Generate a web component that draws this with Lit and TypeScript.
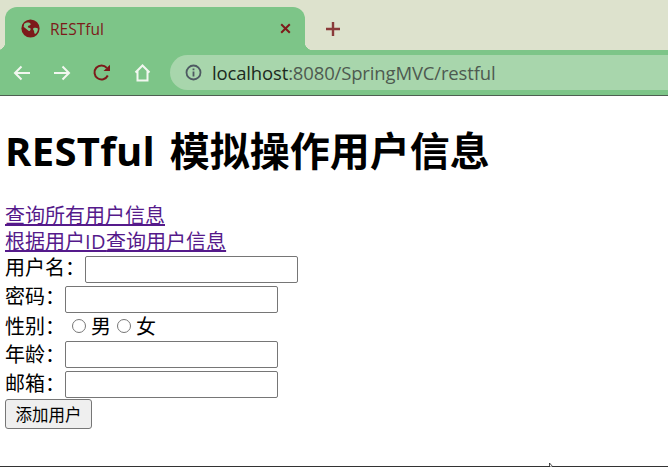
import { LitElement, html, css } from "lit";
import { customElement } from "lit/decorators.js";

@customElement("app-root")
export class AppRoot extends LitElement {
  static styles = css`
    :host { display: block; width: 668px; height: 467px; overflow: hidden; background: #fff; color: #000;
      font-family: "Open Sans", "Noto Sans CJK SC", sans-serif; }
    * { box-sizing: border-box; }
    svg { display: block; flex: none; }
    .strip { height: 50px; background: #dde2cd; display: flex; align-items: flex-end; padding-left: 5px; }
    .tab { position: relative; width: 300px; height: 43px; background: #7dc588; border-radius: 12px 12px 0 0; display: flex; align-items: center; padding: 0 14px 0 16px; color: #7d1a1a; }
    .tab::before, .tab::after { content: ""; position: absolute; bottom: 0; width: 8px; height: 8px; }
    .tab::before { left: -8px; background: radial-gradient(circle at 0 0, transparent 8px, #7dc588 8.5px); }
    .tab::after { right: -8px; background: radial-gradient(circle at 100% 0, transparent 8px, #7dc588 8.5px); }
    .title { font: 15.5px "Open Sans", sans-serif; margin-left: 10px; flex: 1; }
    .plus { margin: 0 0 13px 20px; }
    .bar { height: 46px; background: #7dc588; border-bottom: 1px solid #4e5f52; display: flex; align-items: flex-start; padding: 5px 0 0 13px; }
    .nav { width: 40px; height: 35px; display: flex; align-items: center; }
    .home { padding-left: 1px; }
    .omni { flex: 1; height: 35px; margin-left: -3px; background: #a8d6ac; border-radius: 18px 0 0 18px; display: flex; align-items: center; padding-left: 15px; font: 18.5px "Open Sans", sans-serif; color: #4e5a50; }
    .url { margin-left: 10px; letter-spacing: -0.15px; }
    .host { color: #1c2a20; }
    .page { position: relative; height: 371px; border-bottom: 1px solid #333; padding: 0 5px; font-size: 20px; }
    h1 { margin: 0; height: 107px; padding-top: 21px; font: 700 40px/64px "Open Sans", "Noto Sans CJK SC", sans-serif; letter-spacing: 0.3px; word-spacing: 4px; white-space: nowrap; }
    h1 .cn { font-family: "Noto Sans CJK SC", sans-serif; letter-spacing: 0; }
    a { display: block; height: 26px; line-height: 26px; color: #551a8b; text-decoration: underline; }
    .id { letter-spacing: 0.5px; }
    .row { display: flex; align-items: flex-start; }
    .r1 { height: 30px; line-height: 26px; }
    .r2 { height: 28px; line-height: 24px; }
    .r3 { height: 28px; line-height: 28px; align-items: center; }
    .r4 { height: 29px; line-height: 28px; }
    .r5 { height: 29px; line-height: 28px; }
    input[type="text"] { width: 213px; height: 27px; margin: 1px 0 0; border: 1px solid #767676; border-radius: 2px; background: #fff; padding: 0; }
    .tall { height: 28px; }
    .r4 input[type="text"] { margin-top: 0; }
    input[type="radio"] { width: 14px; height: 14px; margin: 0 5px 2px 7px; }
    input.second[type="radio"] { margin-left: 6px; }
    button { display: block; width: 87px; height: 30px; padding: 0; border: 1px solid #767676; border-radius: 3px; background: #efefef; color: #000; font: 16.500px "Noto Sans CJK SC", sans-serif; }
    .cursor { position: absolute; left: 549px; top: 367px; }
  `;

  render() {
    return html`
      <div class="strip">
        <div class="tab">
          <svg width="19" height="19" viewBox="0 0 18 18"><circle cx="9" cy="9" r="8.6" fill="#7d1a1a"/><path d="M3 4.500c2-1 3-1.600 5-1 1 .4 1.500 1.200 1 2-.6.800-2 .5-2.500 1.500-.3.800.8 1.300 1.800 1.500 1 .3 1 1.200.6 2-.4.800-1 1-1.800.6C5.500 10 4 8 2.500 7.500zM12 8.500c1.500-.5 3-.3 4 .5.100 2-.6 3.500-2 5-1 .2-1.500-.6-1.500-1.500 0-1-.4-1.500-.9-2.200-.3-.8-.1-1.500.4-1.800z" fill="#7dc588"/></svg>
          <span class="title">RESTful</span>
          <svg width="11" height="11" viewBox="0 0 11 11"><path d="M1.200 1.200l8.600 8.600M9.800 1.200l-8.600 8.600" stroke="#7d1a1a" stroke-width="2"/></svg>
        </div>
        <svg class="plus" width="16" height="16" viewBox="0 0 16 16"><path d="M8 1v14M1 8h14" stroke="#8a3a3a" stroke-width="2.400"/></svg>
      </div>
      <div class="bar">
        <div class="nav"><svg width="18" height="16" viewBox="0 0 18 16"><path d="M17 8H2M8.500 1.500L2 8l6.500 6.500" fill="none" stroke="#f2f7f0" stroke-width="2"/></svg></div>
        <div class="nav"><svg width="18" height="16" viewBox="0 0 18 16"><path d="M1 8h15M9.500 1.500L16 8l-6.500 6.500" fill="none" stroke="#f2f7f0" stroke-width="2"/></svg></div>
        <div class="nav"><svg width="18" height="18" viewBox="0 0 18 18"><path d="M14.800 11.500A7 7 0 1 1 13.800 3.800" fill="none" stroke="#7d1a1a" stroke-width="2"/><path d="M10.500 7H17V.8z" fill="#7d1a1a"/></svg></div>
        <div class="nav home"><svg width="17" height="18" viewBox="0 0 17 18"><path d="M1.500 8.500L8.500 1.500l7 7M3.500 7v9.500h10V7" fill="none" stroke="#f2f7f0" stroke-width="2"/></svg></div>
        <div class="omni">
          <svg width="17" height="17" viewBox="0 0 17 17"><circle cx="8.500" cy="8.500" r="7" fill="none" stroke="#4e5a62" stroke-width="1.800"/><path d="M8.500 7.500v5M8.500 4.500v1.800" stroke="#4e5a62" stroke-width="1.800"/></svg>
          <span class="url"><span class="host">localhost</span>:8080/SpringMVC/restful</span>
        </div>
      </div>
      <div class="page">
        <h1>RESTful <span class="cn">模拟操作用户信息</span></h1>
        <a href="#">查询所有用户信息</a>
        <a href="#">根据用户<span class="id">ID</span>查询用户信息</a>
        <div class="row r1">用户名：<input type="text" /></div>
        <div class="row r2">密码：<input type="text" /></div>
        <div class="row r3">性别：<input type="radio" />男<input class="second" type="radio" />女</div>
        <div class="row r4">年龄：<input class="tall" type="text" /></div>
        <div class="row r5">邮箱：<input class="tall" type="text" /></div>
        <button>添加用户</button>
        <svg class="cursor" width="5" height="4" viewBox="0 0 5 4"><path d="M.5 0v4h3.500z" fill="#fff" stroke="#222" stroke-width=".8"/></svg>
      </div>
    `;
  }
}
